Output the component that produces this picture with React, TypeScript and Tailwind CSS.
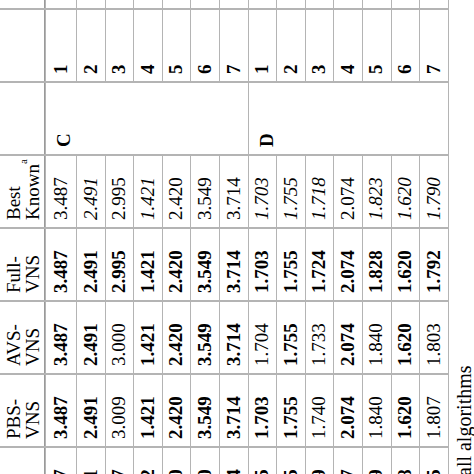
type Cell = [string, 'b' | 'n' | 'i']

type Row = {
  group?: string
  idx: number
  prev: string
  pbs: Cell
  avs: Cell
  full: string
  best: Cell
}

const rows: Row[] = [
  { group: 'C', idx: 1, prev: '3.487', pbs: ['3.487', 'b'], avs: ['3.487', 'b'], full: '3.487', best: ['3.487', 'n'] },
  { idx: 2, prev: '2.491', pbs: ['2.491', 'b'], avs: ['2.491', 'b'], full: '2.491', best: ['2.491', 'i'] },
  { idx: 3, prev: '2.997', pbs: ['3.009', 'n'], avs: ['3.000', 'n'], full: '2.995', best: ['2.995', 'n'] },
  { idx: 4, prev: '1.422', pbs: ['1.421', 'b'], avs: ['1.421', 'b'], full: '1.421', best: ['1.421', 'i'] },
  { idx: 5, prev: '2.420', pbs: ['2.420', 'b'], avs: ['2.420', 'b'], full: '2.420', best: ['2.420', 'n'] },
  { idx: 6, prev: '3.550', pbs: ['3.549', 'b'], avs: ['3.549', 'b'], full: '3.549', best: ['3.549', 'n'] },
  { idx: 7, prev: '3.714', pbs: ['3.714', 'b'], avs: ['3.714', 'b'], full: '3.714', best: ['3.714', 'n'] },
  { group: 'D', idx: 1, prev: '1.705', pbs: ['1.703', 'b'], avs: ['1.704', 'n'], full: '1.703', best: ['1.703', 'i'] },
  { idx: 2, prev: '1.755', pbs: ['1.755', 'b'], avs: ['1.755', 'b'], full: '1.755', best: ['1.755', 'i'] },
  { idx: 3, prev: '1.729', pbs: ['1.740', 'n'], avs: ['1.733', 'n'], full: '1.724', best: ['1.718', 'i'] },
  { idx: 4, prev: '2.077', pbs: ['2.074', 'b'], avs: ['2.074', 'b'], full: '2.074', best: ['2.074', 'n'] },
  { idx: 5, prev: '1.839', pbs: ['1.840', 'n'], avs: ['1.840', 'n'], full: '1.828', best: ['1.823', 'i'] },
  { idx: 6, prev: '1.628', pbs: ['1.620', 'b'], avs: ['1.620', 'b'], full: '1.620', best: ['1.620', 'i'] },
  { idx: 7, prev: '1.795', pbs: ['1.807', 'n'], avs: ['1.803', 'n'], full: '1.792', best: ['1.790', 'i'] },
]

const cell = 'bg-white flex items-center pl-[7px] whitespace-nowrap'
const head = 'bg-white flex flex-col justify-end pl-[7px] pb-[2px] leading-[19px] whitespace-nowrap border-b border-b-[#9a9a9a]'

const styleOf = (s: Cell[1]) => (s === 'b' ? 'font-bold' : s === 'i' ? 'italic' : 'font-normal')

export default function App() {
  return (
    <div className="relative w-[474px] h-[474px] overflow-hidden bg-white text-black font-['Liberation_Serif',serif] text-[19px]">
      {/* the scanned table lies on its side: lay it out upright, then turn it */}
      <div className="w-[586px] origin-top-left -rotate-90 translate-x-[-4px] translate-y-[521px]">
        <div className="grid grid-cols-[repeat(8,71px)] grid-rows-[49px_30px_repeat(13,27.6px)] gap-x-[2px] gap-y-[1px] bg-[#b4b4b4] px-[2px] pb-[1px]">
          <div className={head}></div>
          <div className={head}>
            <span>PBS-</span>
            <span>VNS</span>
          </div>
          <div className={head}>
            <span>AVS-</span>
            <span>VNS</span>
          </div>
          <div className={head}>
            <span>Full-</span>
            <span>VNS</span>
          </div>
          <div className={head}>
            <span>Best</span>
            <span>
              Known<sup className="text-[11px] align-[7px]">a</sup>
            </span>
          </div>
          <div className={head}></div>
          <div className={head}></div>
          <div className={head}></div>

          {rows.map((r, k) => (
            <div key={k} className="contents">
              <div className={`${cell} font-bold`}>{r.prev}</div>
              <div className={`${cell} ${styleOf(r.pbs[1])}`}>{r.pbs[0]}</div>
              <div className={`${cell} ${styleOf(r.avs[1])}`}>{r.avs[0]}</div>
              <div className={`${cell} font-bold`}>{r.full}</div>
              <div className={`${cell} ${styleOf(r.best[1])}`}>{r.best[0]}</div>
              {r.group && (
                <div className="row-span-7 bg-white flex items-start pl-[7px] pt-[4px] font-bold">{r.group}</div>
              )}
              <div className={`${cell} font-bold`}>{r.idx}</div>
              <div className={cell}></div>
            </div>
          ))}
        </div>
        <div className="mt-[3px] pl-[45px] text-[20px] leading-[24px] whitespace-nowrap">all algorithms</div>
      </div>
    </div>
  )
}
